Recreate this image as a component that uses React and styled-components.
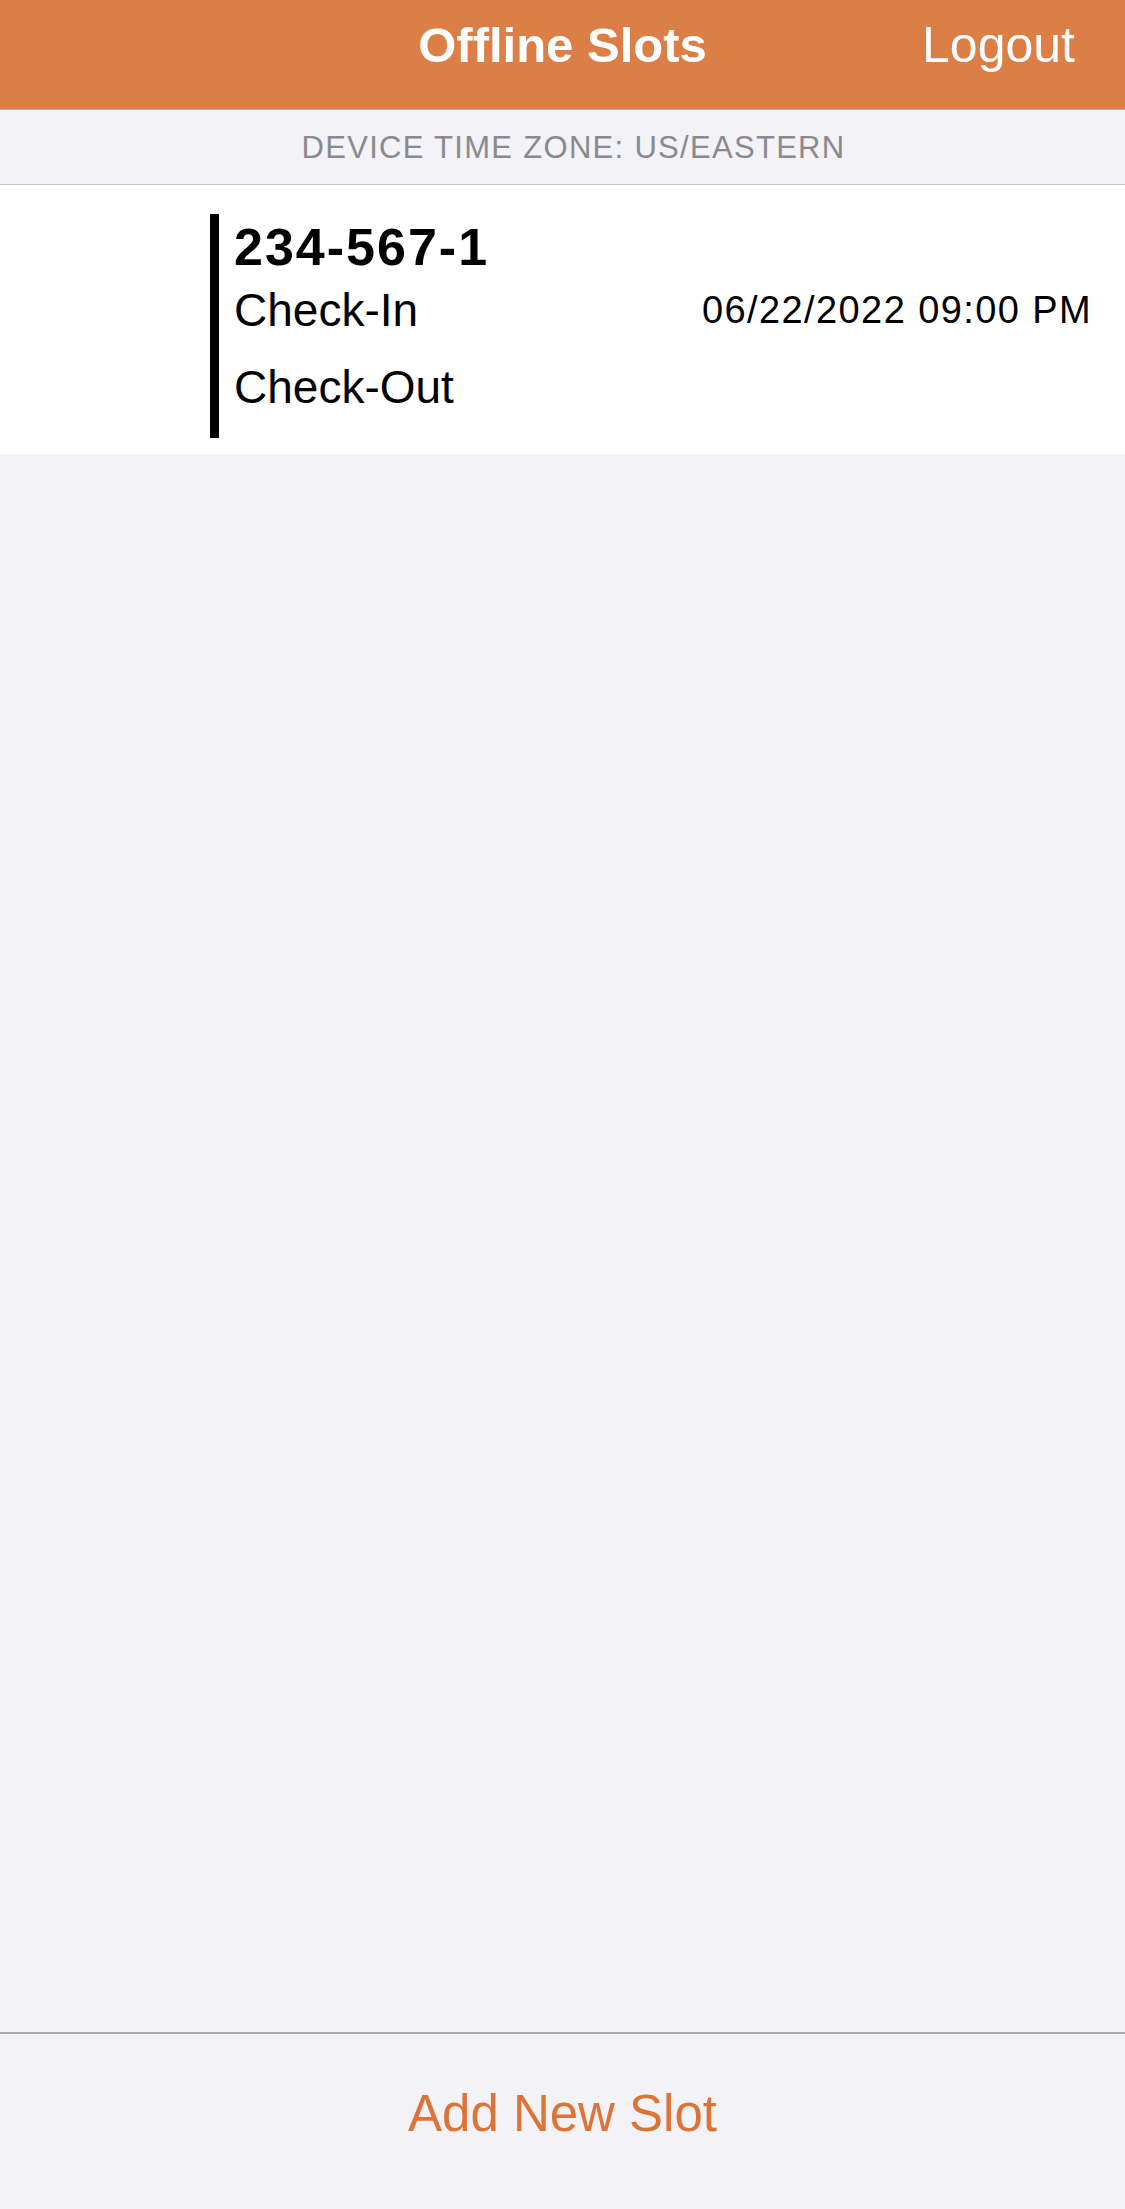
import React from "react";
import styled, { createGlobalStyle } from "styled-components";

const GlobalStyle = createGlobalStyle`
  html, body {
    margin: 0;
    padding: 0;
    background: #f2f2f7;
  }
  body {
    font-family: "Liberation Sans", Arial, sans-serif;
    -webkit-font-smoothing: antialiased;
  }
`;

const slots = [
  {
    id: "234-567-1",
    checkIn: "06/22/2022 09:00 PM",
    checkOut: "",
  },
];

const App = () => {
  return (
    <Screen>
      <GlobalStyle />
      <NavBar>
        <NavSide />
        <NavTitle>Offline Slots</NavTitle>
        <NavSide $right>
          <NavButton type="button">Logout</NavButton>
        </NavSide>
      </NavBar>

      <ZoneBar>Device Time Zone: US/Eastern</ZoneBar>

      <SlotList>
        {slots.map((slot) => (
          <SlotCard key={slot.id}>
            <SlotBody>
              <SlotTitle>{slot.id}</SlotTitle>
              <SlotRow>
                <SlotLabel>Check-In</SlotLabel>
                <SlotTime>{slot.checkIn}</SlotTime>
              </SlotRow>
              <SlotRow $gap>
                <SlotLabel>Check-Out</SlotLabel>
                <SlotTime>{slot.checkOut}</SlotTime>
              </SlotRow>
            </SlotBody>
          </SlotCard>
        ))}
      </SlotList>

      <Footer>
        <AddButton type="button">Add New Slot</AddButton>
      </Footer>
    </Screen>
  );
};

const Screen = styled.div`
  min-height: 100vh;
  display: flex;
  flex-direction: column;
  background: #f2f2f7;
`;

const NavBar = styled.header`
  height: 110px;
  box-sizing: border-box;
  padding: 17px 50px 0 50px;
  background: #dc7f47;
  border-bottom: 1px solid #b9b4b2;
  display: grid;
  grid-template-columns: 1fr auto 1fr;
  align-items: start;
  color: #ffffff;
`;

const NavSide = styled.div`
  display: flex;
  justify-content: ${(p) => (p.$right ? "flex-end" : "flex-start")};
`;

const NavTitle = styled.h1`
  margin: 0;
  font-size: 49px;
  line-height: 56px;
  font-weight: 700;
  text-align: center;
`;

const NavButton = styled.button`
  border: none;
  background: none;
  padding: 0;
  color: #ffffff;
  font-family: inherit;
  font-size: 50px;
  line-height: 56px;
  font-weight: 400;
  cursor: pointer;
`;

const ZoneBar = styled.div`
  height: 75px;
  box-sizing: border-box;
  border-bottom: 1px solid #c6c6c8;
  display: flex;
  align-items: center;
  justify-content: center;
  padding: 1px 0 0 22px;
  color: #8a8a8e;
  font-size: 31px;
  letter-spacing: 1.3px;
  text-transform: uppercase;
`;

const SlotList = styled.main`
  flex: 1;
  display: flex;
  flex-direction: column;
`;

const SlotCard = styled.div`
  background: #ffffff;
  padding: 29px 33px 16px 210px;
`;

const SlotBody = styled.div`
  border-left: 9px solid #000000;
  padding: 5px 0 25px 15px;
  display: flex;
  flex-direction: column;
`;

const SlotTitle = styled.div`
  font-size: 52px;
  line-height: 57px;
  font-weight: 700;
  letter-spacing: 2px;
  color: #000000;
`;

const SlotRow = styled.div`
  display: flex;
  align-items: center;
  justify-content: space-between;
  margin-top: ${(p) => (p.$gap ? "25px" : "8px")};
`;

const SlotLabel = styled.span`
  font-size: 46px;
  line-height: 52px;
  color: #000000;
`;

const SlotTime = styled.span`
  font-size: 38px;
  line-height: 44px;
  letter-spacing: 1.4px;
  color: #000000;
`;

const Footer = styled.footer`
  height: 177px;
  box-sizing: border-box;
  border-top: 2px solid #a9a9ae;
  padding-top: 50px;
  display: flex;
  justify-content: center;
  align-items: flex-start;
`;

const AddButton = styled.button`
  border: none;
  background: none;
  padding: 0;
  color: #dd7437;
  font-family: inherit;
  font-size: 51px;
  line-height: 60px;
  cursor: pointer;
`;

export default App;
